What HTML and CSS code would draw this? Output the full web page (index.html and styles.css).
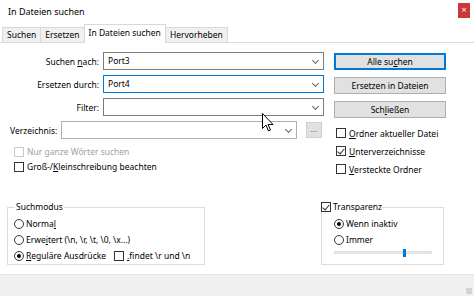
FILE: index.html
```html
<!DOCTYPE html>
<html lang="de">
  <head>
    <meta charset="UTF-8" />
    <title>In Dateien suchen</title>
    <link rel="stylesheet" href="styles.css">
  </head>
  <body>
    <div class="titlebar">
      <span>In Dateien suchen</span>
      <span class="close">×</span>
    </div>

    <div class="tabs">
      <div class="tab">Suchen</div>
      <div class="tab">Ersetzen</div>
      <div class="tab active">In Dateien suchen</div>
      <div class="tab">Hervorheben</div>
    </div>

    <div class="main">
      <div class="left">
        <div class="row">
          <label class="lbl">Suchen <u>n</u>ach:</label>
          <div class="combo">Port3<span class="chev"></span></div>
        </div>
        <div class="row">
          <label class="lbl">Ersetzen durch:</label>
          <div class="combo focus">Port4<span class="chev"></span></div>
        </div>
        <div class="row">
          <label class="lbl">Filter:</label>
          <div class="combo"><span class="chev"></span></div>
        </div>
        <div class="row dir">
          <label class="lbl-dir">Verzeichnis:</label>
          <div class="combo wide"><span class="chev"></span></div>
          <div class="dots">...</div>
        </div>
        <div class="checks">
          <div class="check disabled"><span class="cb"></span>Nur ganze Wörter suchen</div>
          <div class="check"><span class="cb"></span>Groß-/<u>K</u>leinschreibung beachten</div>
        </div>
      </div>

      <div class="right">
        <div class="btn default">Alle su<u>c</u>hen</div>
        <div class="btn">Ersetzen in Dateien</div>
        <div class="btn">Sch<u>l</u>ießen</div>
        <div class="rchecks">
          <div class="check"><span class="cb"></span><u>O</u>rdner aktueller Datei</div>
          <div class="check"><span class="cb on"></span><u>U</u>nterverzeichnisse</div>
          <div class="check"><span class="cb"></span><u>V</u>ersteckte Ordner</div>
        </div>
      </div>
    </div>

    <div class="groups">
      <fieldset class="group mode">
        <legend>Suchmodus</legend>
        <div class="radio"><span class="rb"></span>Norma<u>l</u></div>
        <div class="radio"><span class="rb"></span>Erwe<u>i</u>tert (\n, \r, \t, \0, \x...)</div>
        <div class="radio">
          <span class="rb on"></span><u>R</u>eguläre Ausdrücke
          <span class="cb dotall"></span><u>.</u> findet \r und \n
        </div>
      </fieldset>

      <fieldset class="group transp">
        <legend><span class="cb on"></span>Transparenz</legend>
        <div class="radio"><span class="rb on"></span>Wenn inaktiv</div>
        <div class="radio"><span class="rb"></span>Immer</div>
        <div class="slider"><span class="thumb"></span></div>
      </fieldset>
    </div>

    <div class="statusbar"><span class="grip"></span></div>

    <svg class="cursor" width="12" height="19" viewBox="0 0 12 19">
      <path d="M0.5 0.5 L0.5 15.5 L4 12 L6.5 18 L8.5 17 L6 11.5 L11 11.5 Z" fill="#fff" stroke="#000" stroke-width="1" />
    </svg>
  </body>
</html>
```

FILE: styles.css
```css
body {
  margin: 0;
  width: 474px;
  height: 296px;
  overflow: hidden;
  position: relative;
  background: #fff;
  color: #000;
  font-family: "Noto Sans", sans-serif;
  font-size: 8.5px;
}

u {
  text-decoration-thickness: 1px;
  text-underline-offset: 1px;
}

.titlebar {
  height: 22px;
  display: flex;
  align-items: center;
  justify-content: space-between;
  padding-left: 8px;
  font-size: 9px;
}

.close {
  width: 12px;
  height: 15px;
  margin-right: 4px;
  margin-top: -2px;
  background: #c8373a;
  color: #fff;
  font-size: 9px;
  line-height: 14px;
  text-align: center;
}

.tabs {
  height: 20px;
  display: flex;
  align-items: flex-end;
  padding-left: 2px;
  border-bottom: 1px solid #dadada;
}

.tab {
  height: 14px;
  line-height: 14px;
  padding: 0 4px;
  margin-right: -1px;
  background: #f0f0f0;
  border: 1px solid #d9d9d9;
  border-bottom: none;
}

.tab.active {
  height: 18px;
  line-height: 16px;
  margin-bottom: -1px;
  background: #fff;
  position: relative;
}

.main {
  display: flex;
  padding-top: 9px;
}

.left {
  width: 325px;
}

.row {
  display: flex;
  align-items: center;
  margin-bottom: 5px;
}

.lbl {
  width: 103px;
  padding-right: 4px;
  box-sizing: border-box;
  text-align: right;
}

.lbl-dir {
  width: 51px;
  padding-left: 10px;
}

.combo {
  width: 221px;
  height: 18px;
  box-sizing: border-box;
  border: 1px solid #7a7a7a;
  padding-left: 4px;
  line-height: 16px;
  position: relative;
}

.combo.focus {
  border-color: #0078d7;
}

.combo.wide {
  width: 236px;
  border-color: #adadad;
}

.chev {
  position: absolute;
  right: 5px;
  top: 5px;
  width: 4px;
  height: 4px;
  border-right: 1px solid #666;
  border-bottom: 1px solid #666;
  transform: rotate(45deg);
}

.row.dir {
  margin-top: 2px;
}

.dots {
  margin-left: 9px;
  width: 16px;
  height: 16px;
  box-sizing: border-box;
  background: #e1e1e1;
  border: 1px solid #d0d0d0;
  color: #666;
  text-align: center;
  line-height: 12px;
}

.checks {
  padding-left: 14px;
  margin-top: 2px;
}

.check {
  display: flex;
  align-items: center;
  height: 15px;
}

.check.disabled {
  color: #a0a0a0;
}

.cb {
  display: inline-block;
  width: 10px;
  height: 10px;
  box-sizing: border-box;
  border: 1px solid #333;
  margin-right: 3px;
  position: relative;
  flex: none;
}

.check.disabled .cb {
  border-color: #ccc;
}

.cb.on::after {
  content: "";
  position: absolute;
  left: 2px;
  top: 0px;
  width: 3px;
  height: 6px;
  border-right: 1px solid #333;
  border-bottom: 1px solid #333;
  transform: rotate(40deg);
}

.right {
  width: 112px;
  margin-left: 9px;
  padding-top: 1px;
}

.btn {
  height: 17px;
  box-sizing: border-box;
  margin-bottom: 7px;
  background: #e1e1e1;
  border: 1px solid #adadad;
  text-align: center;
  line-height: 15px;
}

.btn.default {
  border: 2px solid #0078d7;
  line-height: 13px;
}

.rchecks {
  padding-left: 2px;
  margin-top: -1px;
}

.rchecks .check {
  height: 18px;
}

.groups {
  display: flex;
  margin-top: 24px;
}

.group {
  margin: 0;
  border: 1px solid #dcdcdc;
  height: 63px;
  box-sizing: border-box;
  padding: 4px 0 0 6px;
}

.group legend {
  padding: 0 1px;
  margin-left: 1px;
  line-height: 10px;
}

.group.mode {
  margin-left: 7px;
  width: 198px;
}

.group.transp {
  margin-left: 116px;
  width: 123px;
  padding-left: 12px;
}

.group.transp legend {
  display: flex;
  align-items: center;
  margin-left: -13px;
  padding: 0;
}

.group.transp legend .cb {
  margin-right: 2px;
}

.radio {
  display: flex;
  align-items: center;
  height: 17px;
  margin-top: -1px;
}

.rb {
  display: inline-block;
  width: 10px;
  height: 10px;
  box-sizing: border-box;
  border: 1px solid #333;
  border-radius: 50%;
  margin-right: 2px;
  position: relative;
  flex: none;
}

.rb.on::after {
  content: "";
  position: absolute;
  left: 2px;
  top: 2px;
  width: 4px;
  height: 4px;
  border-radius: 50%;
  background: #000;
}

.cb.dotall {
  margin-left: 8px;
}

.slider {
  position: relative;
  width: 98px;
  height: 3px;
  margin-top: 3px;
  background: #e7e7e7;
  border: 1px solid #e0e0e0;
  box-sizing: border-box;
}

.thumb {
  position: absolute;
  left: 68px;
  top: -3px;
  width: 3px;
  height: 8px;
  background: #0078d7;
}

.statusbar {
  position: absolute;
  left: 0;
  right: 0;
  bottom: 0;
  height: 21px;
  background: #f0f0f0;
  border-top: 1px solid #e6e6e6;
}

.grip {
  position: absolute;
  right: 2px;
  bottom: 2px;
  width: 6px;
  height: 6px;
  background: radial-gradient(circle, #b0b0b0 0.6px, transparent 0.8px) 0 0 / 2px 2px;
}

.cursor {
  position: absolute;
  left: 262px;
  top: 113px;
}
```
